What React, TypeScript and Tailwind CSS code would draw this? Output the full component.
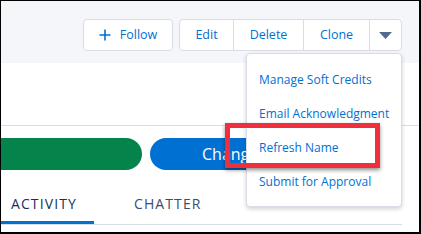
import React from "react";

const menuItems = [
  "Manage Soft Credits",
  "Email Acknowledgment",
  "Refresh Name",
  "Submit for Approval",
];

function PlusIcon() {
  return (
    <svg width="12" height="12" viewBox="0 0 12 12" className="shrink-0">
      <path d="M6 0.5v11M0.5 6h11" stroke="#0070d2" strokeWidth="1.6" />
    </svg>
  );
}

function DownTriangle() {
  return (
    <svg width="13" height="7" viewBox="0 0 13 7">
      <path d="M0 0h13L6.5 7z" fill="#54698d" />
    </svg>
  );
}

export default function App() {
  return (
    <div
      className="relative h-[234px] w-[421px] overflow-hidden border-t border-l border-r-2 border-b-2 border-black bg-white"
      style={{ fontFamily: '"Open Sans", "Noto Sans", sans-serif' }}
    >
      {/* header bar */}
      <div className="flex h-[62px] items-start justify-end bg-[#f4f6f9] pt-[18px] pr-[17px]">
        <button className="flex h-[32px] w-[90px] items-center justify-center gap-[9px] rounded-[4px] border border-[#d8dde6] bg-white text-[12.5px] text-[#0070d2]">
          <PlusIcon />
          <span>Follow</span>
        </button>
        <div className="ml-[6px] flex h-[32px] overflow-hidden rounded-[4px] border border-[#d8dde6] bg-white text-[12.5px] text-[#0070d2]">
          <div className="flex w-[54px] items-center justify-center border-r border-[#d8dde6]">
            Edit
          </div>
          <div className="flex w-[70px] items-center justify-center border-r border-[#d8dde6]">
            Delete
          </div>
          <div className="flex w-[66px] items-center justify-center border-r border-[#d8dde6]">
            Clone
          </div>
          <div className="flex w-[31px] items-center justify-center">
            <DownTriangle />
          </div>
        </div>
      </div>

      {/* body */}
      <div className="h-[62px]" />
      <div className="h-px bg-[#d8dde6]" />

      <div className="mt-[12px] flex h-[32px] gap-[8px]">
        <div className="ml-[-60px] h-[32px] w-[201px] rounded-full bg-[#04844b]" />
        <div className="flex h-[32px] w-[200px] items-center rounded-full bg-[#0070d2] pl-[52px] text-[16px] text-white">
          Change Owner
        </div>
      </div>

      {/* tabs */}
      <div className="mt-[15px] mr-[17px] flex border-b border-[#d8dde6]">
        <div className="flex h-[39px] w-[93px] items-center border-b-[3px] border-[#0070d2] pl-[10px] text-[14px] tracking-[1.1px] text-[#16325c]">
          ACTIVITY
        </div>
        <div className="ml-[40px] flex h-[39px] items-center pb-[3px] text-[14px] tracking-[1.1px] text-[#3e4d68]">
          CHATTER
        </div>
      </div>

      {/* dropdown menu */}
      <div className="absolute top-[52px] left-[245px] w-[156px] rounded-[4px] border border-[#d8dde6] bg-white pt-[9px] pb-[7px] shadow-[0_2px_4px_rgba(0,0,0,0.18)]">
        {menuItems.map((item) => (
          <div
            key={item}
            className="flex h-[34px] items-center pl-[12px] text-[12px] whitespace-nowrap text-[#0070d2]"
          >
            {item}
          </div>
        ))}
      </div>

      {/* highlight box */}
      <div className="absolute top-[122px] left-[224px] h-[45px] w-[155px] border-[5px] border-[#ef2f3d] shadow-[0_2px_4px_rgba(0,0,0,0.45)]" />
    </div>
  );
}
